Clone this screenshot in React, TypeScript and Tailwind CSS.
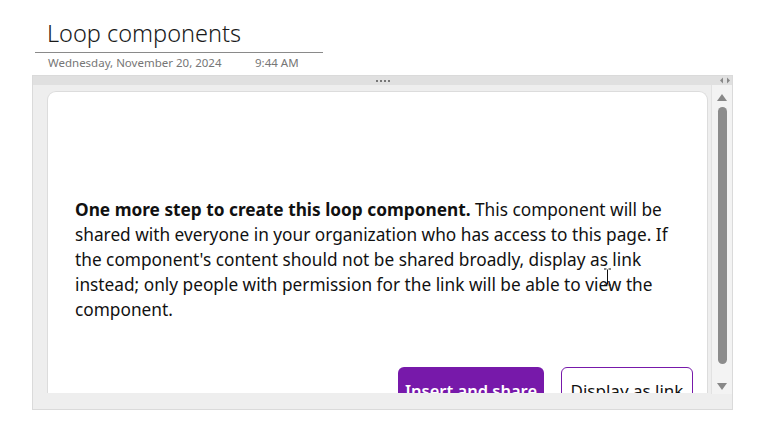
import React from "react";

const font = { fontFamily: '"Noto Sans", "Liberation Sans", Arial, sans-serif' };

export default function App() {
  return (
    <div className="w-[767px] h-[437px] bg-white relative overflow-hidden" style={font}>
      {/* Header */}
      <div className="pt-[17px] pl-[35px]">
        <div className="w-[288px] border-b border-[#8a8a8a] pl-[12px] pb-[2px]">
          <div className="text-[23.5px] leading-[33px] text-[#1a1a1a] font-light">Loop components</div>
        </div>
        <div className="flex pl-[13px] pt-[3px] text-[11.5px] leading-[14px] text-[#767676]">
          <span className="w-[207px]">Wednesday, November 20, 2024</span>
          <span>9:44 AM</span>
        </div>
      </div>

      {/* Container */}
      <div className="absolute left-[32px] top-[75px] w-[701px] h-[335px] border border-[#dadada] bg-[#eeeeee] flex flex-col">
        <div className="h-[9px] bg-[#e0e0e0] flex items-center justify-center relative">
          <div className="flex gap-[2px]">
            <span className="w-[2px] h-[2px] bg-[#777]" />
            <span className="w-[2px] h-[2px] bg-[#777]" />
            <span className="w-[2px] h-[2px] bg-[#777]" />
            <span className="w-[2px] h-[2px] bg-[#777]" />
          </div>
          <svg className="absolute right-[2px] top-[1px]" width="10" height="7" viewBox="0 0 10 7">
            <polygon points="3,0.5 3,6.5 0,3.5" fill="#888" />
            <polygon points="7,0.5 7,6.5 10,3.5" fill="#888" />
          </svg>
        </div>
        <div className="flex flex-1 min-h-0">
          <div className="pl-[14px] pt-[6px] pb-[16px] flex-1 min-h-0 flex">
            <div className="w-[661px] h-full bg-white border border-[#dcdcdc] border-b-0 rounded-t-[9px] overflow-hidden">
              <div className="pt-[105px] pl-[27px] pr-[14px]">
                <p className="text-[17.25px] leading-[25px] text-[#111] whitespace-nowrap">
                  <b>One more step to create this loop component.</b> This component will be
                  <br />
                  shared with everyone in your organization who has access to this page. If
                  <br />
                  the component's content should not be shared broadly, display as link
                  <br />
                  instead; only people with permission for the link will be able to view the
                  <br />
                  component.
                </p>
                <div className="flex justify-end gap-[17px] mt-[45px]">
                  <button className="w-[146px] h-[46px] rounded-[6px] bg-[#7719aa] text-white text-[16.5px] font-semibold leading-[25px] whitespace-nowrap">
                    Insert and share
                  </button>
                  <button className="w-[132px] h-[46px] rounded-[6px] bg-white border border-[#7719aa] text-[#111] text-[17px] leading-[25px] whitespace-nowrap">
                    Display as link
                  </button>
                </div>
              </div>
            </div>
          </div>
          <div className="w-[22px] ml-[3px] bg-[#f3f3f3] border-l border-[#e2e2e2] flex flex-col items-center pt-[9px] mb-[15px]">
            <svg width="10" height="7" viewBox="0 0 10 7">
              <polygon points="5,0 10,7 0,7" fill="#888" />
            </svg>
            <div className="w-[9px] h-[257px] mt-[6px] rounded-full bg-[#8c8c8c]" />
            <svg className="mt-[19px]" width="10" height="7" viewBox="0 0 10 7">
              <polygon points="0,0 10,0 5,7" fill="#888" />
            </svg>
          </div>
        </div>
      </div>

      {/* Text cursor */}
      <svg className="absolute left-[603px] top-[268px]" width="9" height="18" viewBox="0 0 9 18">
        <path d="M1 1 H3.5 M5.5 1 H8 M4.5 1.5 V16.5 M1 17 H3.5 M5.5 17 H8" stroke="#111" strokeWidth="1" fill="none" />
      </svg>
    </div>
  );
}
